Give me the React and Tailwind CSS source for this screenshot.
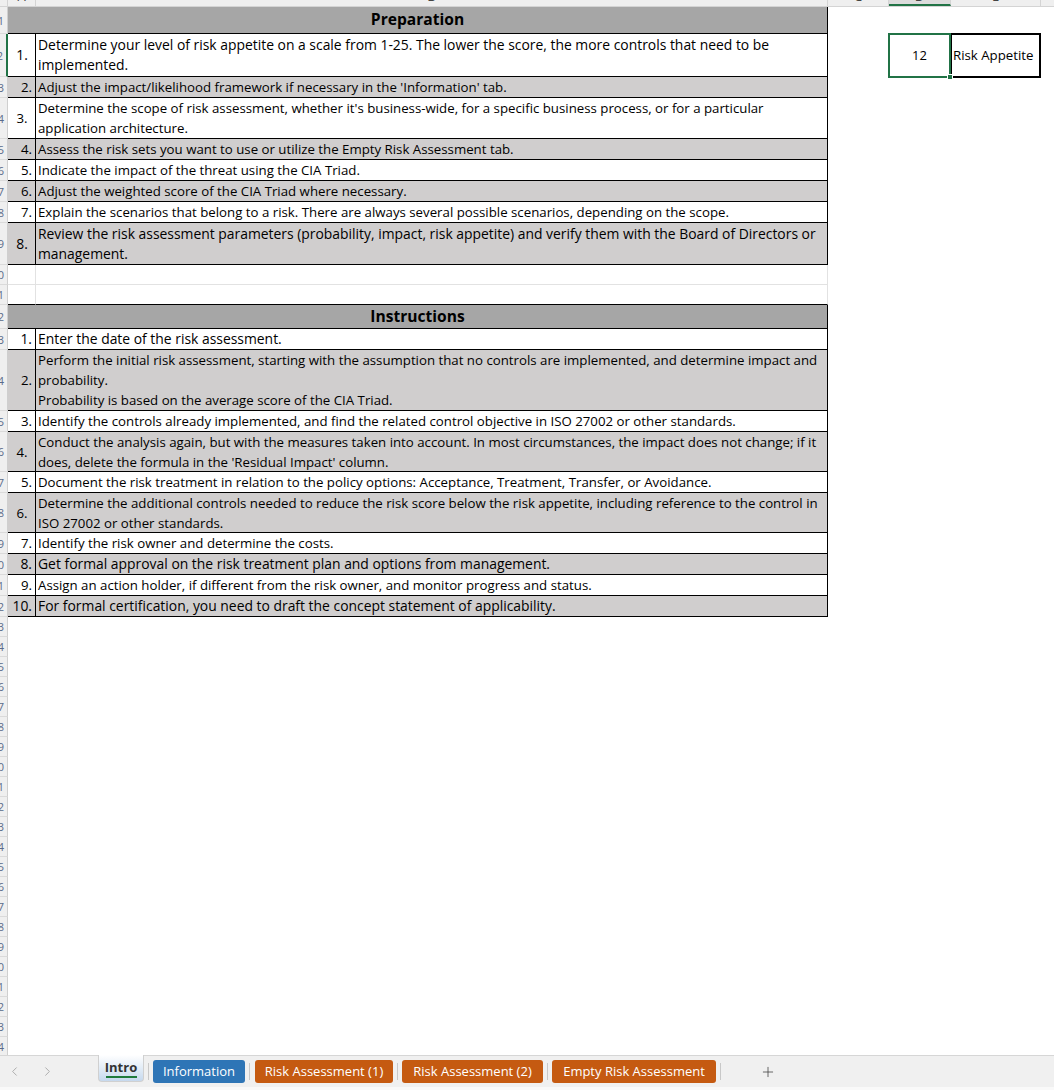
import { ChevronLeft, ChevronRight, Plus } from 'lucide-react';

const font = { fontFamily: '"Open Sans", "Liberation Sans", sans-serif' };

const prep = [
    { n: '1.', lines: ['Determine your level of risk appetite on a scale from 1-25. The lower the score, the more controls that need to be', 'implemented.'], h: 'h-[43px]', mid: true, big: true },
    { n: '2.', lines: ["Adjust the impact/likelihood framework if necessary in the 'Information' tab."], h: 'h-[21px]', gray: true },
    { n: '3.', lines: ["Determine the scope of risk assessment, whether it's business-wide, for a specific business process, or for a particular", 'application architecture.'], h: 'h-[41px]', mid: true },
    { n: '4.', lines: ['Assess the risk sets you want to use or utilize the Empty Risk Assessment tab.'], h: 'h-[21px]', gray: true },
    { n: '5.', lines: ['Indicate the impact of the threat using the CIA Triad.'], h: 'h-[21px]' },
    { n: '6.', lines: ['Adjust the weighted score of the CIA Triad where necessary.'], h: 'h-[21px]', gray: true },
    { n: '7.', lines: ['Explain the scenarios that belong to a risk. There are always several possible scenarios, depending on the scope.'], h: 'h-[21px]' },
    { n: '8.', lines: ['Review the risk assessment parameters (probability, impact, risk appetite) and verify them with the Board of Directors or', 'management.'], h: 'h-[42px]', gray: true, mid: true, big: true },
];

const instr = [
    { n: '1.', lines: ['Enter the date of the risk assessment.'], h: 'h-[21px]', big: true },
    { n: '2.', lines: ['Perform the initial risk assessment, starting with the assumption that no controls are implemented, and determine impact and', 'probability.', 'Probability is based on the average score of the CIA Triad.'], h: 'h-[61px]', gray: true },
    { n: '3.', lines: ['Identify the controls already implemented, and find the related control objective in ISO 27002 or other standards.'], h: 'h-[21px]' },
    { n: '4.', lines: ['Conduct the analysis again, but with the measures taken into account. In most circumstances, the impact does not change; if it', "does, delete the formula in the 'Residual Impact' column."], h: 'h-[40px]', gray: true, mid: true },
    { n: '5.', lines: ['Document the risk treatment in relation to the policy options: Acceptance, Treatment, Transfer, or Avoidance.'], h: 'h-[21px]' },
    { n: '6.', lines: ['Determine the additional controls needed to reduce the risk score below the risk appetite, including reference to the control in', 'ISO 27002 or other standards.'], h: 'h-[40px]', gray: true, mid: true },
    { n: '7.', lines: ['Identify the risk owner and determine the costs.'], h: 'h-[21px]' },
    { n: '8.', lines: ['Get formal approval on the risk treatment plan and options from management.'], h: 'h-[21px]', gray: true, big: true },
    { n: '9.', lines: ['Assign an action holder, if different from the risk owner, and monitor progress and status.'], h: 'h-[21px]' },
    { n: '10.', lines: ['For formal certification, you need to draft the concept statement of applicability.'], h: 'h-[21px]', gray: true, big: true },
];

function RowHead({ num, active }) {
    return (
        <div className={`w-[8px] shrink-0 h-full bg-[#efefef] border-r border-b border-b-[#dadada] overflow-hidden flex justify-end items-center ${active ? 'border-r-[#217346] border-r-2' : 'border-r-[#cfcfcf]'}`}>
            <span className="text-[11px] text-[#5b6b8a] leading-none mr-[3px] whitespace-nowrap">{num}</span>
        </div>
    );
}

function Rest({ extra }) {
    return (
        <>
            <div className="w-[61px] shrink-0 h-full"></div>
            <div className="w-[62px] shrink-0 h-full relative">{extra?.d}</div>
            <div className="w-[90px] shrink-0 h-full relative">{extra?.e}</div>
            <div className="flex-1 h-full"></div>
        </>
    );
}

function TitleRow({ num, title, h }) {
    return (
        <div className={`flex ${h}`}>
            <RowHead num={num} />
            <div className="w-[820px] shrink-0 h-full bg-[#a6a6a6] border-b border-r border-black flex items-center justify-center">
                <span className="text-[15.6px] font-bold text-black leading-none">{title}</span>
            </div>
            <Rest />
        </div>
    );
}

function ItemRow({ num, item, active, extra }) {
    const bg = item.gray ? 'bg-[#d0cece]' : 'bg-white';
    const size = item.big ? 'text-[13.9px]' : 'text-[13.25px]';
    return (
        <div className={`flex ${item.h}`}>
            <RowHead num={num} active={active} />
            <div className={`w-[28px] shrink-0 h-full ${bg} border-b border-r border-black flex items-center ${item.mid ? 'justify-center pl-[1px]' : 'justify-end pr-[3px]'}`}>
                <span className={`${size} leading-[20px] text-black`}>{item.n}</span>
            </div>
            <div className={`w-[792px] shrink-0 h-full ${bg} border-b border-r border-black pl-[2px] flex flex-col justify-center`}>
                {item.lines.map((l) => (
                    <span key={l} className={`${size} leading-[20px] text-black whitespace-nowrap`}>{l}</span>
                ))}
            </div>
            <Rest extra={extra} />
        </div>
    );
}

function EmptyRow({ num, h = 'h-[20px]', lines, bottom }) {
    return (
        <div className={`flex ${h}`}>
            <RowHead num={num} />
            {lines ? (
                <>
                    <div className={`w-[28px] shrink-0 h-full border-r border-r-[#e2e2e2] border-b ${bottom || 'border-b-[#e2e2e2]'}`}></div>
                    <div className={`w-[792px] shrink-0 h-full border-r border-r-[#e2e2e2] border-b ${bottom || 'border-b-[#e2e2e2]'}`}></div>
                </>
            ) : (
                <div className="w-[820px] shrink-0 h-full"></div>
            )}
            <Rest />
        </div>
    );
}

function ColHeaders() {
    const cols = [
        { w: 'w-[8px]', l: '' },
        { w: 'w-[28px]', l: 'A' },
        { w: 'w-[792px]', l: 'B' },
        { w: 'w-[61px]', l: 'C' },
        { w: 'w-[62px]', l: 'D', active: true },
        { w: 'w-[90px]', l: 'E' },
    ];
    return (
        <div className="flex h-[7px] bg-[#efefef] border-b border-[#d4d4d4]">
            {cols.map((c, i) => (
                <div key={i} className={`${c.w} shrink-0 h-full overflow-hidden border-r border-r-[#d4d4d4] ${c.active ? 'bg-[#dcdcdc] border-b-2 border-b-[#217346]' : ''}`}>
                    <div className="h-[20px] -mt-[13px] flex items-center justify-center text-[13px] text-[#444]">{c.l}</div>
                </div>
            ))}
            <div className="flex-1 h-full"></div>
        </div>
    );
}

function Tab({ label, cls }) {
    return (
        <div className={`h-[23px] rounded-[3px] flex items-center justify-center text-[13px] text-white whitespace-nowrap ${cls}`}>{label}</div>
    );
}

function Sep({ cls = 'mx-[4px]' }) {
    return <div className={`w-px h-[17px] bg-[#c8c8c8] ${cls}`}></div>;
}

export default function App() {
    const riskCells = {
        d: (
            <div className="absolute -left-px -top-px w-[63px] h-[45px] border-2 border-[#217346] flex items-center justify-center bg-white z-10">
                <span className="text-[13px] text-black">12</span>
                <div className="absolute -right-[4px] -bottom-[4px] w-[6px] h-[6px] bg-[#217346] border border-white"></div>
            </div>
        ),
        e: (
            <div className="absolute -left-px -top-px w-[91px] h-[45px] border-2 border-black flex items-center pl-[1px] bg-white">
                <span className="text-[13.25px] text-black whitespace-nowrap">Risk Appetite</span>
            </div>
        ),
    };

    const empties = [];
    for (let r = 23; r <= 45; r++) empties.push(r);

    return (
        <div className="w-[1054px] h-[1090px] flex flex-col bg-white overflow-hidden" style={font}>
            <div className="flex-1 overflow-hidden">
                <ColHeaders />
                <TitleRow num="1" title="Preparation" h="h-[27px]" />
                {prep.map((it, i) => (
                    <ItemRow key={it.n} num={String(i + 2)} item={it} active={i === 0} extra={i === 0 ? riskCells : null} />
                ))}
                <EmptyRow num="10" lines />
                <EmptyRow num="11" lines bottom="border-b-black" />
                <TitleRow num="12" title="Instructions" h="h-[24px]" />
                {instr.map((it, i) => (
                    <ItemRow key={it.n} num={String(i + 13)} item={it} />
                ))}
                {empties.map((r) => (
                    <EmptyRow key={r} num={String(r)} />
                ))}
            </div>
            <div className="h-[35px] shrink-0 bg-[#f0f0f0] border-t border-[#d6d6d6] flex flex-col">
                <div className="h-[31px] flex items-start">
                    <div className="w-[92px] shrink-0 h-full flex items-center pl-[7px] gap-[18px] text-[#a3a3a3]">
                        <ChevronLeft size={15} strokeWidth={1.4} />
                        <ChevronRight size={15} strokeWidth={1.4} />
                    </div>
                    <div className="w-[46px] h-[27px] -mt-px rounded-b-[4px] border border-t-0 border-[#d0d0d0] bg-gradient-to-b from-white to-[#c6d9ee] flex flex-col items-center justify-end pb-[3px] ml-[6px]">
                        <span className="text-[13px] font-bold text-[#333] leading-[16px]">Intro</span>
                        <div className="w-[31px] h-[2px] bg-[#1e7a3c] mt-[1px]"></div>
                    </div>
                    <div className="h-full flex items-center">
                        <Sep cls="ml-[4px] mr-[4px]" />
                        <div className="w-[92px]"><Tab label="Information" cls="bg-[#2e75b6]" /></div>
                        <Sep cls="ml-[4px] mr-[5px]" />
                        <div className="w-[138px]"><Tab label="Risk Assessment (1)" cls="bg-[#c55a11]" /></div>
                        <Sep />
                        <div className="w-[141px]"><Tab label="Risk Assessment (2)" cls="bg-[#c55a11]" /></div>
                        <Sep />
                        <div className="w-[164px]"><Tab label="Empty Risk Assessment" cls="bg-[#c55a11]" /></div>
                        <Sep />
                        <div className="ml-[35px] text-[#444]">
                            <Plus size={16} strokeWidth={1.2} />
                        </div>
                    </div>
                </div>
                <div className="flex-1 bg-[#f9f9f9]"></div>
            </div>
        </div>
    );
}
